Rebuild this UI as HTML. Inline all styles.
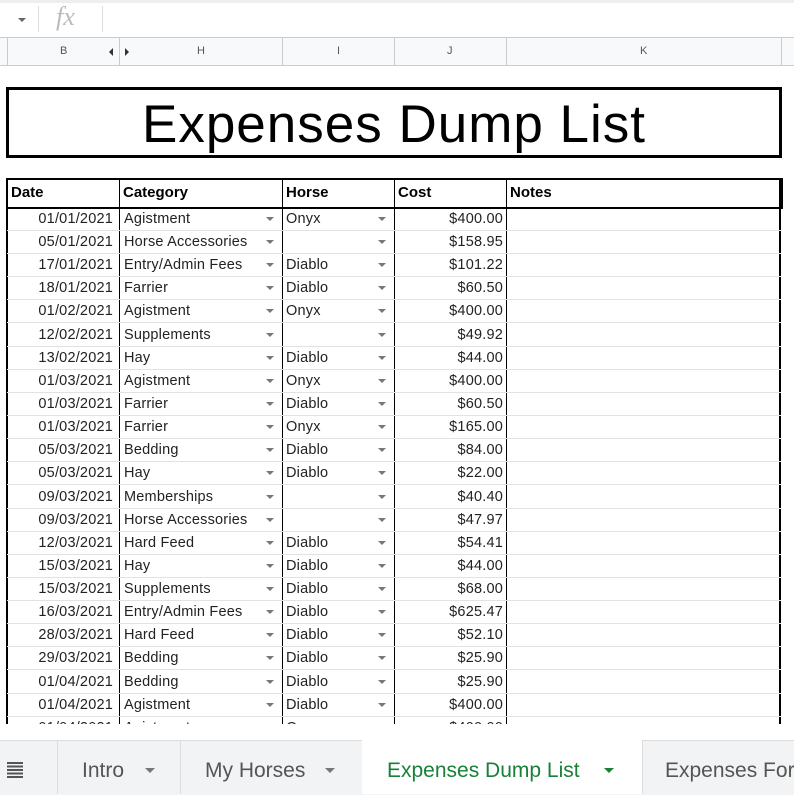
<!DOCTYPE html>
<html><head><style>
body{margin:0;width:794px;height:794px;overflow:hidden;background:#fff;font-family:"Liberation Sans",sans-serif;position:relative}
.a{position:absolute}
.r{position:absolute;left:7px;width:774px;height:23px;border-bottom:1px solid #e2e2e2;font-size:14.5px;color:#222;letter-spacing:.2px}
.r div{position:absolute;top:4px;white-space:nowrap}
.d{right:668px;text-align:right}
.c{left:117px}
.h{left:279px}
.k{right:278px}
.t1,.t2{position:absolute;top:10px;width:0;height:0;border-left:4px solid transparent;border-right:4px solid transparent;border-top:4px solid #777}
.t1{left:259px}.t2{left:371px}
.v{position:absolute;top:179px;height:545px;width:1px;background:#000}
</style></head><body>
<div class="a" style="left:0;top:0;width:794px;height:3px;background:#eee"></div>
<div class="a" style="left:18px;top:18px;width:0;height:0;border-left:4px solid transparent;border-right:4px solid transparent;border-top:4px solid #666"></div>
<div class="a" style="left:38px;top:6px;width:1px;height:26px;background:#ddd"></div>
<div class="a" style="left:56px;top:2px;font-family:'Liberation Serif',serif;font-style:italic;font-size:26px;color:#bbb">fx</div>
<div class="a" style="left:102px;top:6px;width:1px;height:26px;background:#ddd"></div>
<div class="a" style="left:0;top:37px;width:794px;height:27px;background:#f8f9fa;border-top:1px solid #ccc;border-bottom:1px solid #ccc;font-size:11px;color:#555"></div>
<div class="a" style="left:7px;top:38px;width:1px;height:27px;background:#ccc"></div>
<div class="a" style="left:119px;top:38px;width:1px;height:27px;background:#ccc"></div>
<div class="a" style="left:282px;top:38px;width:1px;height:27px;background:#ccc"></div>
<div class="a" style="left:394px;top:38px;width:1px;height:27px;background:#ccc"></div>
<div class="a" style="left:506px;top:38px;width:1px;height:27px;background:#ccc"></div>
<div class="a" style="left:781px;top:38px;width:1px;height:27px;background:#ccc"></div>
<div class="a" style="left:60px;top:45px;font-size:11px;color:#555">B</div>
<div class="a" style="left:197px;top:45px;font-size:11px;color:#555">H</div>
<div class="a" style="left:337px;top:45px;font-size:11px;color:#555">I</div>
<div class="a" style="left:447px;top:45px;font-size:11px;color:#555">J</div>
<div class="a" style="left:640px;top:45px;font-size:11px;color:#555">K</div>
<div class="a" style="left:109px;top:48px;width:0;height:0;border-top:4px solid transparent;border-bottom:4px solid transparent;border-right:4px solid #333"></div>
<div class="a" style="left:125px;top:48px;width:0;height:0;border-top:4px solid transparent;border-bottom:4px solid transparent;border-left:4px solid #333"></div>
<div class="a" style="left:6px;top:87px;width:770px;height:65px;border:3px solid #000;text-align:center;font-size:53px;line-height:70px;letter-spacing:1px;color:#000">Expenses Dump List</div>
<div class="a" style="left:6px;top:178px;width:773px;height:27px;border:2px solid #000;border-bottom:2px solid #000;font-weight:bold;font-size:14.5px"></div>
<div class="a" style="left:11px;top:184px;font-weight:bold;font-size:15px">Date</div>
<div class="a" style="left:123px;top:184px;font-weight:bold;font-size:15px">Category</div>
<div class="a" style="left:286px;top:184px;font-weight:bold;font-size:15px">Horse</div>
<div class="a" style="left:398px;top:184px;font-weight:bold;font-size:15px">Cost</div>
<div class="a" style="left:510px;top:184px;font-weight:bold;font-size:15px">Notes</div>
<div class="v" style="left:6px;width:2px"></div>
<div class="v" style="left:119px"></div>
<div class="v" style="left:282px"></div>
<div class="v" style="left:394px"></div>
<div class="v" style="left:506px"></div>
<div class="v" style="left:779px;width:2px"></div>

<div class="r" style="top:207px"><div class="d">01/01/2021</div><div class="c">Agistment</div><span class="t1"></span><div class="h">Onyx</div><span class="t2"></span><div class="k">$400.00</div></div>
<div class="r" style="top:230px"><div class="d">05/01/2021</div><div class="c">Horse Accessories</div><span class="t1"></span><div class="h"></div><span class="t2"></span><div class="k">$158.95</div></div>
<div class="r" style="top:253px"><div class="d">17/01/2021</div><div class="c">Entry/Admin Fees</div><span class="t1"></span><div class="h">Diablo</div><span class="t2"></span><div class="k">$101.22</div></div>
<div class="r" style="top:276px"><div class="d">18/01/2021</div><div class="c">Farrier</div><span class="t1"></span><div class="h">Diablo</div><span class="t2"></span><div class="k">$60.50</div></div>
<div class="r" style="top:299px"><div class="d">01/02/2021</div><div class="c">Agistment</div><span class="t1"></span><div class="h">Onyx</div><span class="t2"></span><div class="k">$400.00</div></div>
<div class="r" style="top:323px"><div class="d">12/02/2021</div><div class="c">Supplements</div><span class="t1"></span><div class="h"></div><span class="t2"></span><div class="k">$49.92</div></div>
<div class="r" style="top:346px"><div class="d">13/02/2021</div><div class="c">Hay</div><span class="t1"></span><div class="h">Diablo</div><span class="t2"></span><div class="k">$44.00</div></div>
<div class="r" style="top:369px"><div class="d">01/03/2021</div><div class="c">Agistment</div><span class="t1"></span><div class="h">Onyx</div><span class="t2"></span><div class="k">$400.00</div></div>
<div class="r" style="top:392px"><div class="d">01/03/2021</div><div class="c">Farrier</div><span class="t1"></span><div class="h">Diablo</div><span class="t2"></span><div class="k">$60.50</div></div>
<div class="r" style="top:415px"><div class="d">01/03/2021</div><div class="c">Farrier</div><span class="t1"></span><div class="h">Onyx</div><span class="t2"></span><div class="k">$165.00</div></div>
<div class="r" style="top:438px"><div class="d">05/03/2021</div><div class="c">Bedding</div><span class="t1"></span><div class="h">Diablo</div><span class="t2"></span><div class="k">$84.00</div></div>
<div class="r" style="top:461px"><div class="d">05/03/2021</div><div class="c">Hay</div><span class="t1"></span><div class="h">Diablo</div><span class="t2"></span><div class="k">$22.00</div></div>
<div class="r" style="top:485px"><div class="d">09/03/2021</div><div class="c">Memberships</div><span class="t1"></span><div class="h"></div><span class="t2"></span><div class="k">$40.40</div></div>
<div class="r" style="top:508px"><div class="d">09/03/2021</div><div class="c">Horse Accessories</div><span class="t1"></span><div class="h"></div><span class="t2"></span><div class="k">$47.97</div></div>
<div class="r" style="top:531px"><div class="d">12/03/2021</div><div class="c">Hard Feed</div><span class="t1"></span><div class="h">Diablo</div><span class="t2"></span><div class="k">$54.41</div></div>
<div class="r" style="top:554px"><div class="d">15/03/2021</div><div class="c">Hay</div><span class="t1"></span><div class="h">Diablo</div><span class="t2"></span><div class="k">$44.00</div></div>
<div class="r" style="top:577px"><div class="d">15/03/2021</div><div class="c">Supplements</div><span class="t1"></span><div class="h">Diablo</div><span class="t2"></span><div class="k">$68.00</div></div>
<div class="r" style="top:600px"><div class="d">16/03/2021</div><div class="c">Entry/Admin Fees</div><span class="t1"></span><div class="h">Diablo</div><span class="t2"></span><div class="k">$625.47</div></div>
<div class="r" style="top:623px"><div class="d">28/03/2021</div><div class="c">Hard Feed</div><span class="t1"></span><div class="h">Diablo</div><span class="t2"></span><div class="k">$52.10</div></div>
<div class="r" style="top:646px"><div class="d">29/03/2021</div><div class="c">Bedding</div><span class="t1"></span><div class="h">Diablo</div><span class="t2"></span><div class="k">$25.90</div></div>
<div class="r" style="top:670px"><div class="d">01/04/2021</div><div class="c">Bedding</div><span class="t1"></span><div class="h">Diablo</div><span class="t2"></span><div class="k">$25.90</div></div>
<div class="r" style="top:693px"><div class="d">01/04/2021</div><div class="c">Agistment</div><span class="t1"></span><div class="h">Diablo</div><span class="t2"></span><div class="k">$400.00</div></div>
<div class="r" style="top:716px;border:none"><div class="d">01/04/2021</div><div class="c">Agistment</div><div class="h">Onyx</div><div class="k">$400.00</div></div>
<div class="a" style="left:0;top:724px;width:794px;height:70px;background:#fff"></div>

<div class="a" style="left:0;top:740px;width:794px;height:54px;background:#f1f3f4;border-top:1px solid #ddd"></div>
<div class="a" style="left:57px;top:741px;width:1px;height:53px;background:#ddd"></div>
<div class="a" style="left:180px;top:741px;width:1px;height:53px;background:#ddd"></div>
<div class="a" style="left:362px;top:740px;width:280px;height:54px;background:#fff"></div>
<div class="a" style="left:642px;top:741px;width:1px;height:53px;background:#ddd"></div>
<div class="a" style="left:7px;top:762px;width:16px;height:16px;background:repeating-linear-gradient(#555 0 2px,transparent 2px 3.5px)"></div>
<div class="a" style="left:82px;top:759px;font-size:21px;color:#555">Intro</div>
<div class="a" style="left:145px;top:768px;border-left:5px solid transparent;border-right:5px solid transparent;border-top:5px solid #777"></div>
<div class="a" style="left:205px;top:759px;font-size:21px;color:#555">My Horses</div>
<div class="a" style="left:325px;top:768px;border-left:5px solid transparent;border-right:5px solid transparent;border-top:5px solid #777"></div>
<div class="a" style="left:387px;top:759px;font-size:21px;color:#188038">Expenses Dump List</div>
<div class="a" style="left:604px;top:768px;border-left:5px solid transparent;border-right:5px solid transparent;border-top:5px solid #188038"></div>
<div class="a" style="left:665px;top:759px;font-size:21px;color:#555;white-space:nowrap">Expenses For</div>
</body></html>
